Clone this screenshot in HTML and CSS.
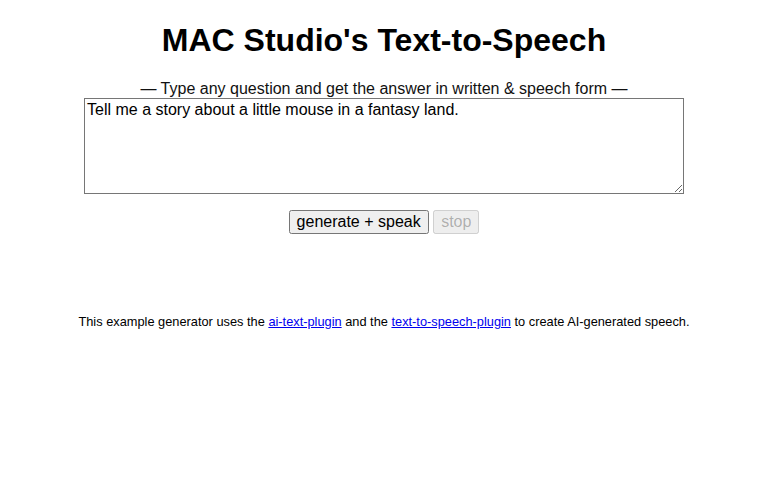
FILE: index.html
```html
<!DOCTYPE html>
<html>
<head>
<meta charset="utf-8">
<link rel="stylesheet" href="styles.css">
</head>
<body>
<h1 class="title">MAC Studio's Text-to-Speech</h1>
<div class="subtitle">— Type any question and get the answer in written &amp; speech form —</div>
<textarea class="prompt">Tell me a story about a little mouse in a fantasy land.</textarea>
<div class="actions">
  <button class="btn">generate + speak</button>
  <button class="btn" disabled>stop</button>
</div>
<p class="footer">This example generator uses the <a href="#">ai-text-plugin</a> and the <a href="#">text-to-speech-plugin</a> to create AI-generated speech.</p>
</body>
</html>
```
FILE: styles.css
```css
body {
  margin: 0 8px 8px;
  font-family: "Liberation Sans", Arial, sans-serif;
  text-align: center;
  color: #000;
  background: #fff;
}
.title {
  font-size: 32px;
  margin: 21.5px 0 21px;
}
.subtitle {
  font-size: 16px;
  color: #111;
}
.prompt {
  display: block;
  margin: 0 auto;
  width: 600px;
  height: 96px;
  box-sizing: border-box;
  font-family: "Liberation Sans", Arial, sans-serif;
  font-size: 16px;
  padding: 2px;
  border: 1px solid #767676;
  resize: vertical;
}
.actions {
  margin-top: 16px;
}
.btn {
  font-family: "Liberation Sans", Arial, sans-serif;
  font-size: 16px;
}
.footer {
  font-size: 12.8px;
  margin-top: 80px;
}
.footer a {
  color: #0000ee;
}
```
